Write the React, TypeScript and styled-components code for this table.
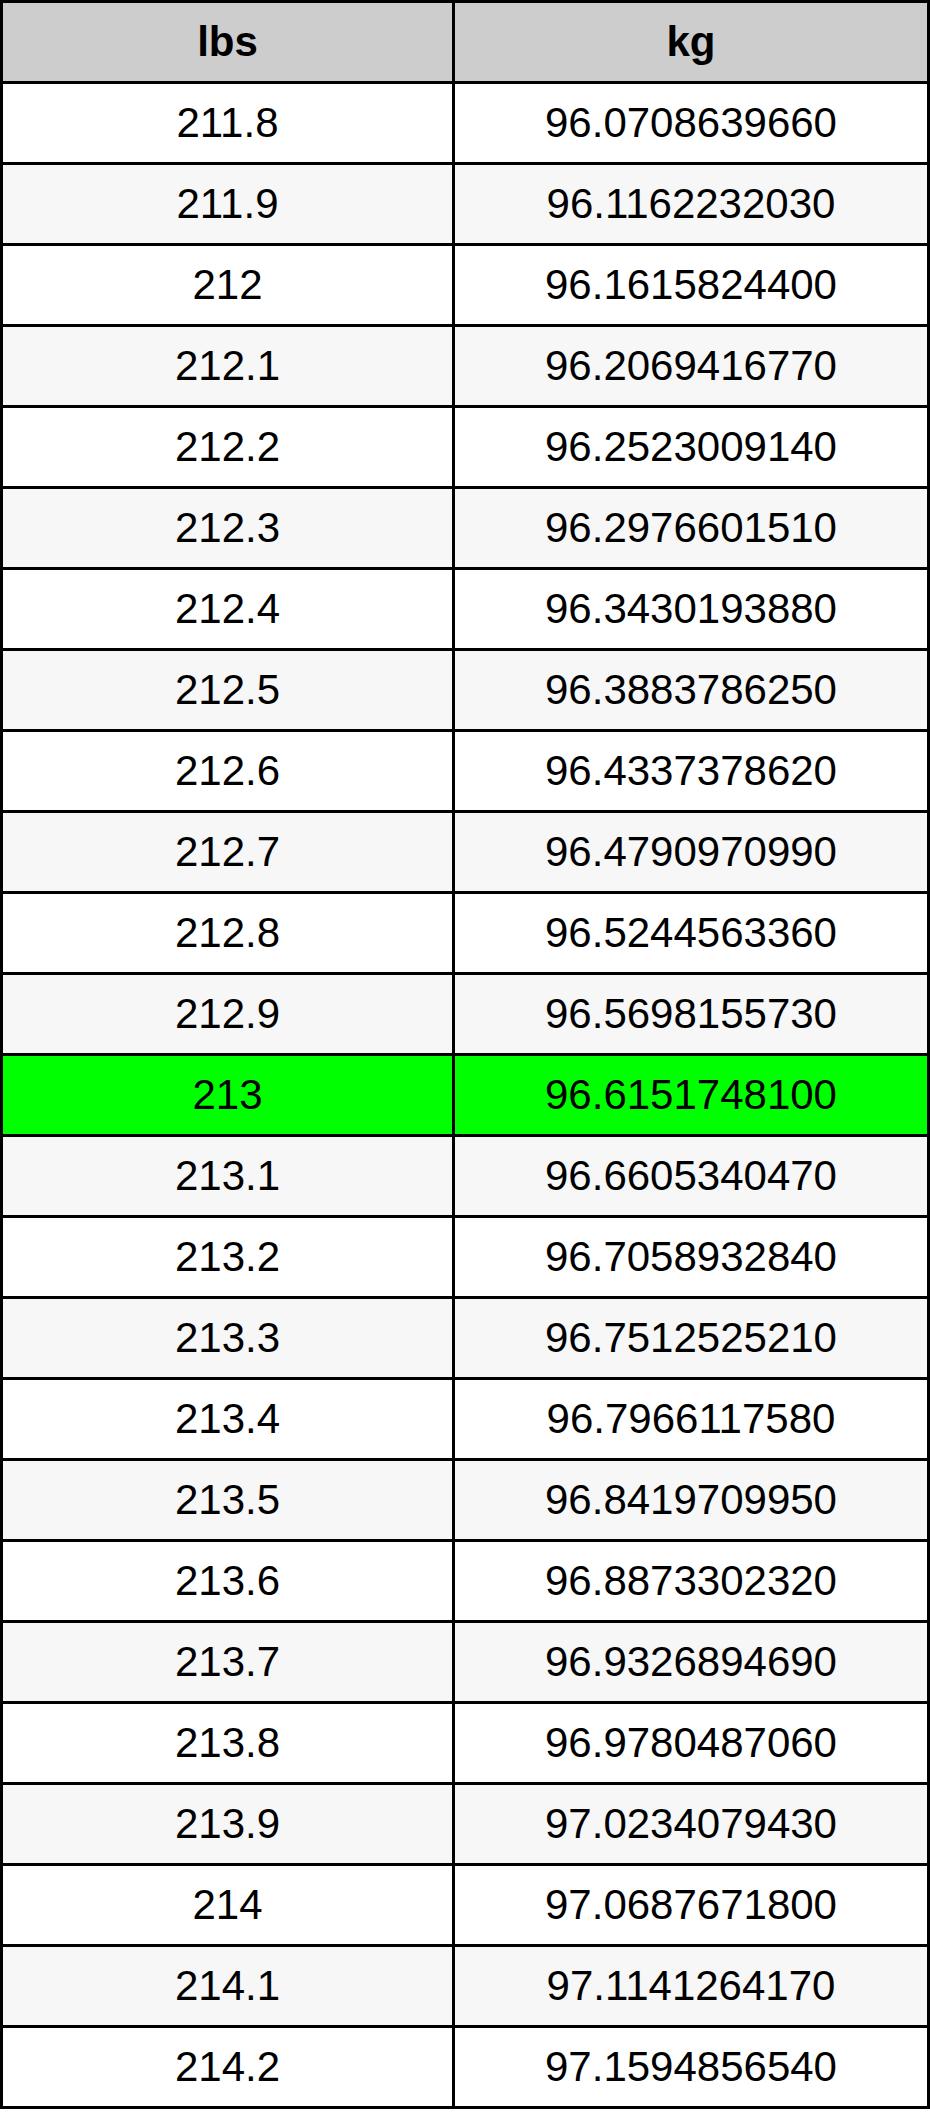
import React from "react";
import styled, { createGlobalStyle } from "styled-components";

const GlobalStyle = createGlobalStyle`
  html, body {
    margin: 0;
    padding: 0;
    background: #ffffff;
  }
  body {
    font-family: "Liberation Sans", Arial, Helvetica, sans-serif;
  }
`;

const Table = styled.table`
  width: 930px;
  border-collapse: separate;
  border-spacing: 0;
  table-layout: fixed;
  border-left: 3px solid #000;
  border-top: 3px solid #000;
  box-sizing: border-box;
  font-family: "Liberation Sans", Arial, Helvetica, sans-serif;
  font-size: 42px;
  color: #000;
`;

const Cell = styled.td<{ $wide?: boolean }>`
  box-sizing: border-box;
  width: ${(p) => (p.$wide ? "475px" : "452px")};
  height: 81px;
  padding: 0;
  text-align: center;
  vertical-align: middle;
  border-right: 3px solid #000;
  border-bottom: 3px solid #000;
  line-height: 1;
`;

const HeadCell = styled(Cell).attrs({ as: "th" })`
  font-weight: bold;
  background: #cdcdcd;
`;

const Row = styled.tr<{ $tone: "white" | "gray" | "green" }>`
  background: ${(p) =>
    p.$tone === "green" ? "#00ff00" : p.$tone === "gray" ? "#f7f7f7" : "#ffffff"};
`;

const rows: [string, string][] = [
  ["211.8", "96.0708639660"],
  ["211.9", "96.1162232030"],
  ["212", "96.1615824400"],
  ["212.1", "96.2069416770"],
  ["212.2", "96.2523009140"],
  ["212.3", "96.2976601510"],
  ["212.4", "96.3430193880"],
  ["212.5", "96.3883786250"],
  ["212.6", "96.4337378620"],
  ["212.7", "96.4790970990"],
  ["212.8", "96.5244563360"],
  ["212.9", "96.5698155730"],
  ["213", "96.6151748100"],
  ["213.1", "96.6605340470"],
  ["213.2", "96.7058932840"],
  ["213.3", "96.7512525210"],
  ["213.4", "96.7966117580"],
  ["213.5", "96.8419709950"],
  ["213.6", "96.8873302320"],
  ["213.7", "96.9326894690"],
  ["213.8", "96.9780487060"],
  ["213.9", "97.0234079430"],
  ["214", "97.0687671800"],
  ["214.1", "97.1141264170"],
  ["214.2", "97.1594856540"],
];

export default function App() {
  return (
    <>
      <GlobalStyle />
      <Table>
        <thead>
          <Row $tone="gray">
            <HeadCell>lbs</HeadCell>
            <HeadCell $wide>kg</HeadCell>
          </Row>
        </thead>
        <tbody>
          {rows.map(([lbs, kg], i) => {
            const tone = lbs === "213" ? "green" : i % 2 === 1 ? "gray" : "white";
            return (
              <Row key={lbs} $tone={tone}>
                <Cell>{lbs}</Cell>
                <Cell $wide>{kg}</Cell>
              </Row>
            );
          })}
        </tbody>
      </Table>
    </>
  );
}
